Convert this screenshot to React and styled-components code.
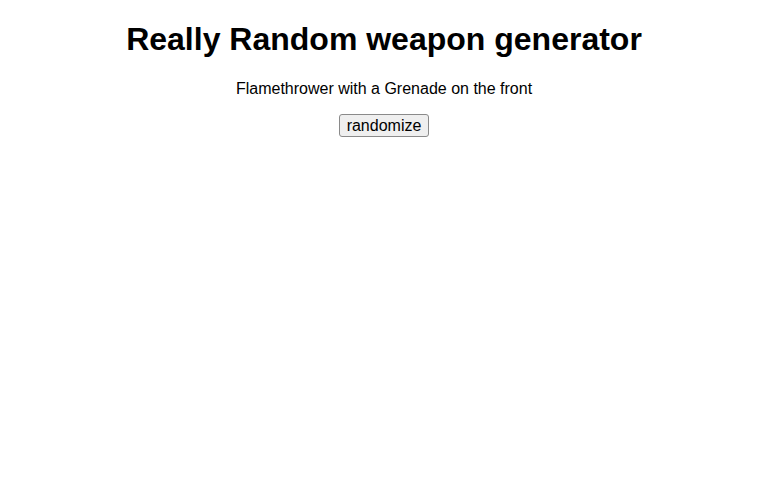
import React, { useState } from "react";
import styled, { createGlobalStyle } from "styled-components";

const GlobalStyle = createGlobalStyle`
  body {
    margin: 0;
    background: #ffffff;
    font-family: "Liberation Sans", Arial, sans-serif;
    color: #000000;
  }
`;

const Page = styled.div`
  text-align: center;
`;

const Title = styled.h1`
  font-size: 32px;
  font-weight: bold;
  margin: 21.44px 0;
`;

const Result = styled.p`
  font-size: 16px;
  margin: 16px 0;
`;

const RandomButton = styled.button`
  font-family: "Liberation Sans", Arial, sans-serif;
  font-size: 16px;
  line-height: 19px;
  color: #000000;
  background: #efefef;
  border: 1px solid #8a8a8a;
  border-radius: 3px;
  padding: 1px 7px;
  cursor: pointer;
  &:hover {
    background: #e5e5e5;
  }
`;

const weapons = ["Flamethrower", "Crossbow", "Shotgun", "Trebuchet", "Slingshot"];
const attachments = ["Grenade", "Banana", "Chainsaw", "Rubber Duck", "Toaster"];
const spots = ["front", "back", "side", "top"];

const pick = (list) => list[Math.floor(Math.random() * list.length)];

export default function App() {
  const [weapon, setWeapon] = useState({
    base: "Flamethrower",
    extra: "Grenade",
    spot: "front",
  });

  const randomize = () =>
    setWeapon({ base: pick(weapons), extra: pick(attachments), spot: pick(spots) });

  return (
    <>
      <GlobalStyle />
      <Page>
        <Title>Really Random weapon generator</Title>
        <Result>
          {weapon.base} with a {weapon.extra} on the {weapon.spot}
        </Result>
        <RandomButton onClick={randomize}>randomize</RandomButton>
      </Page>
    </>
  );
}
